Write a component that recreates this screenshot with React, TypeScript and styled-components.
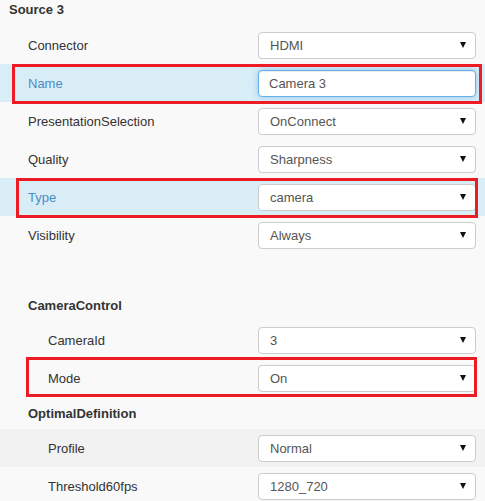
import styled, { createGlobalStyle } from 'styled-components';

const GlobalStyle = createGlobalStyle`
  html, body {
    margin: 0;
    padding: 0;
    background: #f9f9f9;
  }
  body {
    font-family: "Liberation Sans", Arial, sans-serif;
    font-size: 13px;
    color: #333333;
  }
`;

const Page = styled.div`
  width: 485px;
  height: 501px;
  overflow: hidden;
  background: #f9f9f9;
`;

const SectionTitle = styled.div`
  height: 26px;
  padding-left: 9px;
  line-height: 20px;
  font-weight: bold;
  color: #333333;
`;

const GroupTitle = styled.div`
  height: 32px;
  padding-left: 28px;
  display: flex;
  align-items: center;
  font-weight: bold;
  color: #333333;
`;

const Spacer = styled.div<{ $h: number }>`
  height: ${(p) => p.$h}px;
`;

type Tone = 'plain' | 'info' | 'muted';

const toneBg: Record<Tone, string> = {
  plain: 'transparent',
  info: '#d9edf7',
  muted: '#f2f2f2',
};

const Row = styled.div<{ $tone: Tone }>`
  position: relative;
  display: grid;
  grid-template-columns: 1fr 218px;
  align-items: center;
  height: 38px;
  padding-right: 9px;
  background: ${(p) => toneBg[p.$tone]};
`;

const Label = styled.div<{ $indent: number; $tone: Tone }>`
  padding-left: ${(p) => p.$indent}px;
  color: ${(p) => (p.$tone === 'info' ? '#4b8cc5' : '#333333')};
`;

const SelectBox = styled.div`
  position: relative;
  box-sizing: border-box;
  height: 27px;
  padding: 0 24px 0 11px;
  display: flex;
  align-items: center;
  background: #ffffff;
  border: 1px solid #cccccc;
  border-radius: 4px;
  color: #555555;

  &::after {
    content: '';
    position: absolute;
    right: 9px;
    top: 50%;
    margin-top: -3px;
    border-left: 3.5px solid transparent;
    border-right: 3.5px solid transparent;
    border-top: 6px solid #111111;
  }
`;

const TextInput = styled.input`
  box-sizing: border-box;
  width: 100%;
  height: 27px;
  padding: 0 10px;
  font: inherit;
  color: #555555;
  background: #ffffff;
  border: 1px solid #66afe9;
  border-radius: 4px;
  outline: none;
  box-shadow: inset 0 1px 1px rgba(0, 0, 0, 0.075), 0 0 6px rgba(102, 175, 233, 0.6);
`;

// red annotation frame drawn over a row
const Mark = styled.div<{ $left: number; $right: number; $top: number; $bottom: number }>`
  position: absolute;
  left: ${(p) => p.$left}px;
  right: ${(p) => p.$right}px;
  top: ${(p) => p.$top}px;
  bottom: ${(p) => p.$bottom}px;
  border: 3px solid #ed1c24;
  pointer-events: none;
`;

type MarkBox = { left: number; right: number; top: number; bottom: number };

type Field = {
  label: string;
  value: string;
  indent: number;
  tone?: Tone;
  input?: boolean;
  mark?: MarkBox;
};

function FieldRow({ label, value, indent, tone = 'plain', input, mark }: Field) {
  return (
    <Row $tone={tone}>
      <Label $indent={indent} $tone={tone}>{label}</Label>
      {input ? <TextInput defaultValue={value} /> : <SelectBox>{value}</SelectBox>}
      {mark && <Mark $left={mark.left} $right={mark.right} $top={mark.top} $bottom={mark.bottom} />}
    </Row>
  );
}

const sourceFields: Field[] = [
  { label: 'Connector', value: 'HDMI', indent: 28 },
  {
    label: 'Name',
    value: 'Camera 3',
    indent: 28,
    tone: 'info',
    input: true,
    mark: { left: 12, right: 3, top: 0, bottom: -2 },
  },
  { label: 'PresentationSelection', value: 'OnConnect', indent: 28 },
  { label: 'Quality', value: 'Sharpness', indent: 28 },
  {
    label: 'Type',
    value: 'camera',
    indent: 28,
    tone: 'info',
    mark: { left: 16, right: 7, top: 0, bottom: -2 },
  },
  { label: 'Visibility', value: 'Always', indent: 28 },
];

const cameraFields: Field[] = [
  { label: 'CameraId', value: '3', indent: 48 },
  {
    label: 'Mode',
    value: 'On',
    indent: 48,
    mark: { left: 26, right: 8, top: -2, bottom: 0 },
  },
];

const optimalFields: Field[] = [
  { label: 'Profile', value: 'Normal', indent: 48, tone: 'muted' },
  { label: 'Threshold60fps', value: '1280_720', indent: 48 },
];

export default function App() {
  return (
    <Page>
      <GlobalStyle />
      <SectionTitle>Source 3</SectionTitle>
      {sourceFields.map((f) => (
        <FieldRow key={f.label} {...f} />
      ))}
      <Spacer $h={35} />
      <GroupTitle>CameraControl</GroupTitle>
      {cameraFields.map((f) => (
        <FieldRow key={f.label} {...f} />
      ))}
      <GroupTitle>OptimalDefinition</GroupTitle>
      {optimalFields.map((f) => (
        <FieldRow key={f.label} {...f} />
      ))}
    </Page>
  );
}
